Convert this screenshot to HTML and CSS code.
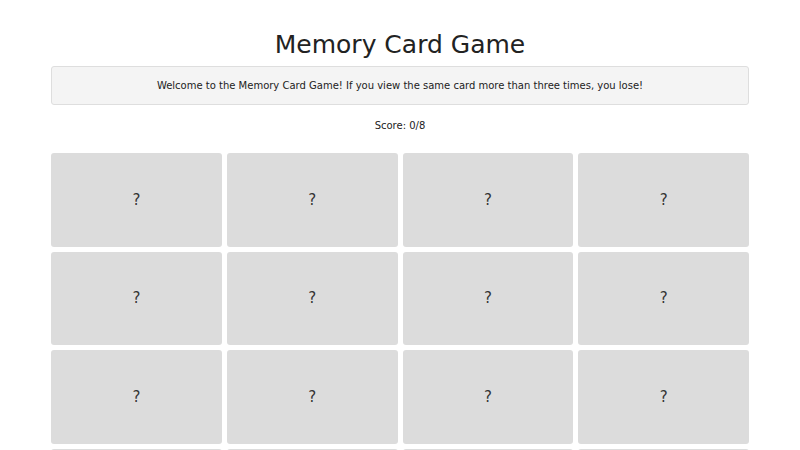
FILE: index.html
```html
<!DOCTYPE html>
<html lang="en">
<head>
  <meta charset="UTF-8" />
  <meta name="viewport" content="width=device-width, initial-scale=1.0" />
  <title>Memory Card Game</title>
  <link rel="stylesheet" href="styles.css">
</head>
<body>
  <div class="container">
    <h1>Memory Card Game</h1>
    <div class="info">
      Welcome to the Memory Card Game! If you view the same card more than three times, you lose!
    </div>
    <p class="score">Score: <span id="score">0</span>/8</p>

    <div class="board" id="board">
      <!-- Cards are filled in by the script below -->
    </div>
  </div>

  <script>
    const board = document.getElementById("board");
    for (let i = 0; i < 16; i++) {
      const card = document.createElement("div");
      card.className = "card";
      card.textContent = "?";
      board.appendChild(card);
    }
  </script>
</body>
</html>
```

FILE: styles.css
```css
body {
  font-family: "DejaVu Sans", sans-serif;
  background-color: #fff;
  color: #222;
  margin: 0;
  padding: 0;
}
.container {
  max-width: 698px;
  margin: 0 auto;
  padding: 30px 0 0;
}
h1 {
  text-align: center;
  font-size: 25px;
  font-weight: normal;
  margin: 0 0 7px;
}
.info {
  background-color: #f4f4f4;
  border: 1px solid #dedede;
  border-radius: 3px;
  padding: 13px 10px;
  font-size: 10px;
  text-align: center;
  color: #222;
}
.score {
  text-align: center;
  font-size: 10px;
  color: #222;
  margin: 15px 0 22px;
}
.board {
  display: grid;
  grid-template-columns: repeat(4, 1fr);
  gap: 5px;
}
.card {
  height: 93.5px;
  background-color: #dcdcdc;
  border-radius: 3px;
  display: flex;
  align-items: center;
  justify-content: center;
  font-size: 15px;
  color: #333;
}
```
